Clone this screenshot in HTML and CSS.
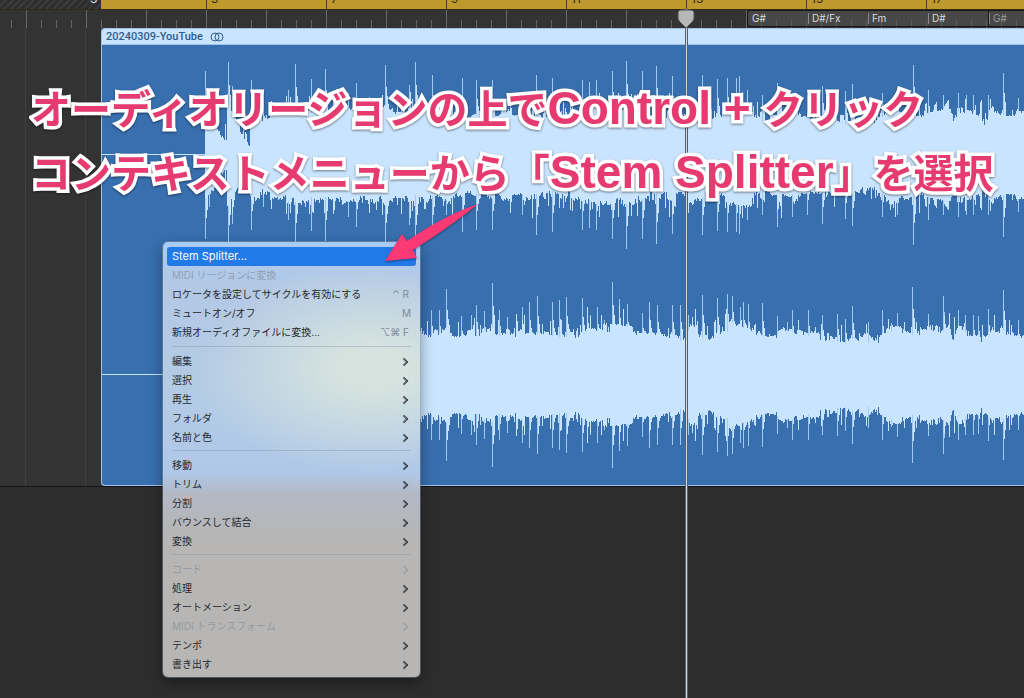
FILE: index.html
```html
<!DOCTYPE html>
<html lang="ja">
<head>
<meta charset="utf-8">
<title>Stem Splitter</title>
<link rel="stylesheet" href="styles.css">
</head>
<body>
<main class="editor">
  <header class="ruler">
    <div class="bars">
      <div class="outside"><span class="bar-number">3</span></div>
      <ol class="cycle">
        <li><span class="bar-number">5</span></li>
        <li><span class="bar-number">7</span></li>
        <li><span class="bar-number">9</span></li>
        <li><span class="bar-number">11</span></li>
        <li><span class="bar-number">13</span></li>
        <li><span class="bar-number">15</span></li>
        <li><span class="bar-number">17</span></li>
      </ol>
    </div>
    <div class="beats">
      <ol class="chords">
        <li>G#</li><li>D#/Fx</li><li>Fm</li><li>D#</li><li class="dim">G#</li>
      </ol>
    </div>
  </header>

  <section class="track">
    <article class="region">
      <h1 class="region-title">20240309-YouTube
        <svg class="stereo" viewBox="0 0 14 10"><circle cx="5" cy="5" r="4"/><circle cx="9" cy="5" r="4"/></svg>
      </h1>
      <svg class="channel" data-channel="0" viewBox="0 0 922 220" preserveAspectRatio="none"><path class="spikes"/><path class="body"/></svg>
      <svg class="channel" data-channel="1" viewBox="0 0 922 220" preserveAspectRatio="none"><path class="spikes"/><path class="body"/></svg>
    </article>
  </section>

  <div class="playhead">
    <svg viewBox="0 0 18 20"><path d="M4 1h10q3 0 3 3v5q0 2-2 4l-6 6-6-6q-2-2-2-4V4q0-3 3-3z"/></svg>
  </div>

  <nav class="menu" aria-label="リージョン">
    <div class="group">
      <button class="item selected"><span>Stem Splitter...</span></button>
      <button class="item" disabled><span>MIDI リージョンに変換</span></button>
      <button class="item"><span>ロケータを設定してサイクルを有効にする</span><kbd>⌃ R</kbd></button>
      <button class="item"><span>ミュートオン/オフ</span><kbd class="bare">M</kbd></button>
      <button class="item"><span>新規オーディオファイルに変換...</span><kbd>⌥⌘ F</kbd></button>
    </div>
    <div class="group">
      <button class="item sub"><span>編集</span></button>
      <button class="item sub"><span>選択</span></button>
      <button class="item sub"><span>再生</span></button>
      <button class="item sub"><span>フォルダ</span></button>
      <button class="item sub"><span>名前と色</span></button>
    </div>
    <div class="group">
      <button class="item sub"><span>移動</span></button>
      <button class="item sub"><span>トリム</span></button>
      <button class="item sub"><span>分割</span></button>
      <button class="item sub"><span>バウンスして結合</span></button>
      <button class="item sub"><span>変換</span></button>
    </div>
    <div class="group">
      <button class="item sub" disabled><span>コード</span></button>
      <button class="item sub"><span>処理</span></button>
      <button class="item sub"><span>オートメーション</span></button>
      <button class="item sub" disabled><span>MIDI トランスフォーム</span></button>
      <button class="item sub"><span>テンポ</span></button>
      <button class="item sub"><span>書き出す</span></button>
    </div>
  </nav>

  <p class="note">オーディオリージョンの上で<b>Control + </b>クリック<br>コンテキストメニューから「<b>Stem Splitter</b>」を選択</p>

  <svg class="arrow" viewBox="0 0 110 70"><path d="M5 61 22 34 27 41Q65 15 98 4 70 27 33 50L37 58Z"/></svg>
</main>
<script src="script.js"></script>
</body>
</html>
```
FILE: styles.css
```css
* { box-sizing: border-box; }

body {
  margin: 0;
  background: #2d2d2d;
  font-family: Inter, "Noto Sans CJK JP", sans-serif;
}

ol { list-style: none; margin: 0; padding: 0; }

.editor {
  position: relative;
  min-height: 100vh;
  overflow: hidden;
}

.ruler { background: #333; }

.bars {
  display: flex;
  height: 10px;
  border-bottom: 1px solid #332b12;
  overflow: hidden;
  font-size: 12px;
  line-height: 14px;
}

.outside {
  flex: none;
  width: 101px;
  padding-left: 90px;
  background: repeating-linear-gradient(135deg, #2d2d2d 0 3px, #3b3b3b 3px 5px);
  color: #ddd;
}

.bar-number { display: block; margin-top: -8px; }

.cycle {
  flex: 1;
  display: flex;
  padding-left: 105px;
  background: #be992e;
  overflow: hidden;
}

.cycle li {
  flex: none;
  width: 120px;
  padding-left: 4px;
  border-left: 1px solid #54431a;
  color: #32290f;
}

.beats {
  display: flex;
  height: 18px;
  padding-left: 747px;
  background:
    repeating-linear-gradient(90deg, transparent 0 26px, #686868 26px 27px, transparent 27px 60px),
    repeating-linear-gradient(90deg, transparent 0 11px, #646464 11px 12px, transparent 12px 15px) 0 100% / 100% 8px no-repeat,
    #333;
}

.chords {
  flex: 1;
  display: flex;
  height: 17px;
  border: 1px solid #171717;
  border-right: 0;
  border-radius: 3px 0 0 3px;
  background:
    repeating-linear-gradient(90deg, transparent 0 13px, #5b5b5b 13px 14px, transparent 14px 15px) 0 100% / 100% 6px no-repeat,
    #474747;
  overflow: hidden;
}

.chords li {
  flex: none;
  width: 60px;
  padding-left: 4px;
  color: #ddd;
  font-size: 10px;
  line-height: 15px;
}

.chords li + li {
  background: linear-gradient(#888, #888) 0 50% / 1px 11px no-repeat;
}

.chords .dim { color: #999; border-left: 1px solid #171717; }

.track {
  display: flex;
  padding-left: 101px;
  background:
    repeating-linear-gradient(90deg, transparent 0 25px, #414141 25px 26px, transparent 26px 60px),
    #333;
  border-bottom: 1px solid #161616;
}

.region {
  flex: 1;
  display: flex;
  flex-direction: column;
  border: 1px solid #9fc2e8;
  border-right: 0;
  border-radius: 4px 0 0 4px;
  background: #386fae;
  overflow: hidden;
}

.region-title {
  display: flex;
  align-items: center;
  gap: 7px;
  height: 16px;
  margin: 0;
  padding-left: 4px;
  background: #c9e4fe;
  border-bottom: 1px solid #9fc2e8;
  color: #2f5d91;
  font: 500 11px/15px Roboto, sans-serif;
}

.stereo { width: 14px; height: 10px; fill: none; stroke: #2f5d91; }

.channel { display: block; width: 100%; height: 220px; shape-rendering: crispEdges; }
.body { fill: #c9e4fe; }
.spikes { fill: #a0caf2; }

.playhead {
  position: absolute;
  top: 9px;
  bottom: 0;
  left: 677px;
  width: 18px;
  background: linear-gradient(90deg, #55606d 0 1px, #d8dade 1px 2px, #55606d 2px 3px) 8px 0 / 3px 100% no-repeat;
}

.playhead svg { display: block; width: 18px; height: 20px; fill: #b7b7b7; stroke: #555; }

.menu {
  position: absolute;
  top: 242px;
  left: 163px;
  width: 257px;
  padding: 5px 4px 3px;
  border-radius: 5px;
  background:
    radial-gradient(ellipse 180px 105px at 82% 29%, #d5e3df 0 20%, #d5e3df00 100%),
    linear-gradient(#a9cbf3 0, #b3c8e5 10%, #b3cbe5 35%, #b0c8e8 53%, #b4b8c5 58%, #b6b7bc 64%, #b7b6b4 70%);
  box-shadow: 0 0 0 1px #8da6c166, 0 5px 14px #0006;
}

.group:first-child { padding-bottom: 1px; }

.group + .group {
  padding-top: 9px;
  background: linear-gradient(#8998a877, #8998a877) 5px 3px / calc(100% - 10px) 1px no-repeat;
}

.item {
  display: flex;
  align-items: center;
  justify-content: space-between;
  width: 100%;
  height: 19px;
  padding: 0 5px;
  border: 0;
  border-radius: 3px;
  background: none;
  color: #252a30;
  font: 10px/19px Inter, "Noto Sans CJK JP", sans-serif;
  white-space: nowrap;
}

.item.selected { background: #217ae8; color: #fff; font-size: 11px; }
.item:disabled { color: #7f8a96aa; }

.item kbd { font: 10px/19px Inter, "DejaVu Sans", sans-serif; color: #7f8b99; padding-right: 2px; }
.item .bare { padding-right: 0; }

.sub::after {
  content: "";
  width: 5px;
  height: 5px;
  margin-right: 4px;
  border: solid currentColor;
  border-width: 1px 1px 0 0;
  box-shadow: inset -1px 1px 0 -0px #252a3088;
  transform: rotate(45deg);
}

.sub:disabled::after { box-shadow: none; }

.note {
  position: absolute;
  top: 75px;
  left: 31px;
  margin: 0;
  color: #e63b70;
  font: 700 40px/64px "Noto Sans CJK JP", sans-serif;
  white-space: nowrap;
  -webkit-text-stroke: 7px #fff;
  paint-order: stroke fill;
  stroke-linejoin: round;
  filter: drop-shadow(0 1px 1px #0007);
}

.note b { font: 700 46px/60px "Liberation Sans", sans-serif; }

.arrow {
  position: absolute;
  top: 200px;
  left: 380px;
  width: 110px;
  height: 70px;
  fill: #fb3974;
  filter: drop-shadow(0 1px 1px #0006);
}
```
FILE: script.js
```js
// Transients as [x, height above the centre line], one list per channel.
const shared = [[103,84],[107,52],[126,93],[130,69],[149,75],[161,52],[186,65],[193,91],[209,76],[223,86],[246,62],[254,72],[283,90],[307,70],[313,93]];
const transients = [
  [...shared, [330,80],[344,60],[360,77],[374,75],[390,75],[420,60],[434,80],[450,77],[480,75],[487,73],[494,75],[510,84],[524,94],[540,84],[554,89],[570,79],[600,80],[615,76],[625,77],[634,77],[637,79],[645,65],[660,60],[675,72],[690,62],[705,60],[720,69],[743,64],[750,71],[780,62],[795,60],[811,90],[826,65],[841,60],[856,62],[864,60],[871,60],[886,60],[901,82],[916,57]],
  [...shared, [329,65],[337,65],[344,86],[359,59],[369,60],[374,70],[382,64],[390,92],[397,65],[405,58],[420,68],[427,73],[435,79],[450,73],[457,75],[464,78],[480,77],[488,60],[495,68],[502,55],[510,93],[517,76],[525,71],[540,62],[547,73],[555,70],[570,70],[578,70],[586,60],[600,80],[615,77],[625,81],[630,79],[638,68],[641,73],[646,71],[660,72],[675,59],[685,53],[690,65],[706,65],[720,60],[735,61],[743,56],[750,69],[766,53],[780,65],[789,52],[795,62],[810,88],[826,61],[841,79],[842,63],[856,65],[863,60],[871,60],[876,59],[886,66],[901,85],[916,55]]
];
// Loudness of the sustained part as [x, height].
const loudness = [[163,35],[200,40],[320,38],[330,35],[345,42],[352,34],[385,36],[430,37],[450,33],[475,36],[485,42],[525,41],[545,34],[572,36],[577,30],[588,40],[608,34],[618,37],[638,46],[648,41],[664,29],[680,37],[715,35],[742,29],[757,32],[775,30],[785,40],[815,36],[840,42],[846,48],[851,28],[856,41],[884,28],[890,39],[905,36],[922,36]];

function level(x) {
  if (x < 103) return 0;
  if (x < 163) {
    const start = x < 126 ? 103 : x < 149 ? 126 : 149;
    return Math.max(6, 42 - (x - start) * (start === 149 ? 1 : 1.7));
  }
  const i = loudness.findIndex(p => p[0] > x);
  const [x0, y0] = loudness[i - 1], [x1, y1] = loudness[i];
  return y0 + (y1 - y0) * (x - x0) / (x1 - x0);
}

document.querySelectorAll('.channel').forEach((svg, c) => {
  let seed = 17 + c * 40;
  const random = () => (seed = (seed * 16807) % 2147483647) / 2147483647;
  let body = 'M0 109h103v1H0z';
  let swell = 0;
  for (let x = 103; x < 922; x++) {
    if (random() > 0.6) swell = random() * 9;
    let h = level(x) + swell + random() * 3;
    if (random() > 0.87) h += random() * 18;
    for (const [px, peak] of transients[c]) {
      const d = x - px;
      if (d === 1) h = Math.max(h, peak * 0.75);
      if (d === 2) h = Math.max(h, peak * 0.65);
      if (d === -1) h = Math.max(h, peak * 0.55);
    }
    h = Math.round(h);
    body += `M${x} ${110 - h}h1v${2 * h}h-1z`;
  }
  const spikes = transients[c].map(([x, h]) => `M${x} ${110 - h}h1v${2 * h}h-1z`).join('');
  svg.querySelector('.body').setAttribute('d', body);
  svg.querySelector('.spikes').setAttribute('d', spikes);
});
```
